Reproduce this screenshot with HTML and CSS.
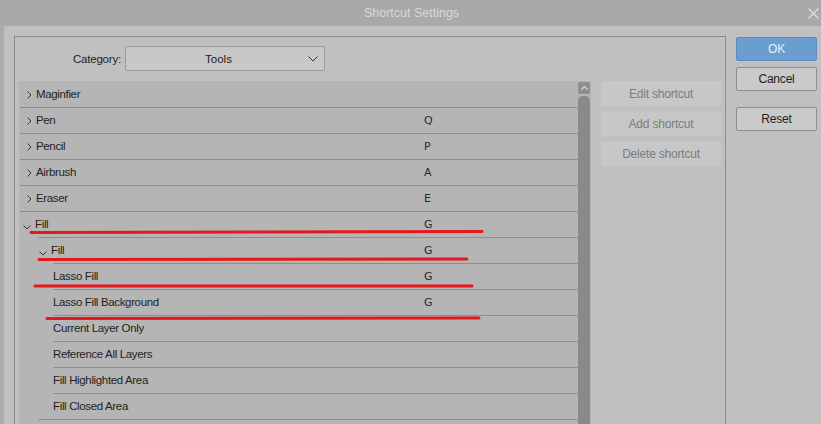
FILE: index.html
```html
<!DOCTYPE html>
<html lang="en">
<head>
  <meta charset="UTF-8" />
  <title>Shortcut Settings</title>
  <link rel="stylesheet" href="styles.css">
</head>
<body>
  <div class="titlebar">
    <span class="title">Shortcut Settings</span>
    <svg class="close" width="11" height="11" viewBox="0 0 11 11"><path d="M0.5 0.5L10.5 10.5M10.5 0.5L0.5 10.5" stroke="#e2e2e2" stroke-width="1.1"/></svg>
  </div>

  <div class="window">
    <div class="groupbox">
      <div class="category">
        <label>Category:</label>
        <div class="select">
          <span>Tools</span>
          <svg class="caret" width="10" height="6" viewBox="0 0 10 6"><path d="M0.5 0.5L5 5L9.5 0.5" fill="none" stroke="#333" stroke-width="1"/></svg>
        </div>
      </div>

      <div class="content">
        <div class="list">
          <div class="rows">
            <div class="row lvl0"><span class="arrow"><svg width="5" height="8" viewBox="0 0 5 8"><path d="M0.5 0.5L4 4L0.5 7.5" fill="none" stroke="#333" stroke-width="1"/></svg></span><span class="name">Maginfier</span><span class="key"></span></div>
            <div class="row lvl0"><span class="arrow"><svg width="5" height="8" viewBox="0 0 5 8"><path d="M0.5 0.5L4 4L0.5 7.5" fill="none" stroke="#333" stroke-width="1"/></svg></span><span class="name">Pen</span><span class="key">Q</span></div>
            <div class="row lvl0"><span class="arrow"><svg width="5" height="8" viewBox="0 0 5 8"><path d="M0.5 0.5L4 4L0.5 7.5" fill="none" stroke="#333" stroke-width="1"/></svg></span><span class="name">Pencil</span><span class="key">P</span></div>
            <div class="row lvl0"><span class="arrow"><svg width="5" height="8" viewBox="0 0 5 8"><path d="M0.5 0.5L4 4L0.5 7.5" fill="none" stroke="#333" stroke-width="1"/></svg></span><span class="name">Airbrush</span><span class="key">A</span></div>
            <div class="row lvl0"><span class="arrow"><svg width="5" height="8" viewBox="0 0 5 8"><path d="M0.5 0.5L4 4L0.5 7.5" fill="none" stroke="#333" stroke-width="1"/></svg></span><span class="name">Eraser</span><span class="key">E</span></div>
            <div class="row lvl0"><span class="arrow open"><svg width="8" height="5" viewBox="0 0 8 5"><path d="M0.5 0.5L4 4L7.5 0.5" fill="none" stroke="#333" stroke-width="1"/></svg></span><span class="name">Fill</span><span class="key">G</span></div>
            <div class="row lvl1"><span class="arrow open"><svg width="8" height="5" viewBox="0 0 8 5"><path d="M0.5 0.5L4 4L7.5 0.5" fill="none" stroke="#333" stroke-width="1"/></svg></span><span class="name">Fill</span><span class="key">G</span></div>
            <div class="row lvl2"><span class="name">Lasso Fill</span><span class="key">G</span></div>
            <div class="row lvl2"><span class="name">Lasso Fill Background</span><span class="key">G</span></div>
            <div class="row lvl2"><span class="name">Current Layer Only</span><span class="key"></span></div>
            <div class="row lvl2"><span class="name">Reference All Layers</span><span class="key"></span></div>
            <div class="row lvl2"><span class="name">Fill Highlighted Area</span><span class="key"></span></div>
            <div class="row lvl2"><span class="name">Fill Closed Area</span><span class="key"></span></div>
            <div class="row lvl1"><span class="name"></span><span class="key"></span></div>
          </div>
          <div class="scrollbar">
            <div class="scroll-up"><svg width="7" height="4" viewBox="0 0 7 4"><path d="M0.5 3.5L3.5 0.5L6.5 3.5" fill="none" stroke="#d8d8d8" stroke-width="1.2"/></svg></div>
            <div class="thumb"></div>
          </div>
        </div>

        <div class="actions">
          <button class="disabled">Edit shortcut</button>
          <button class="disabled">Add shortcut</button>
          <button class="disabled">Delete shortcut</button>
        </div>
      </div>
    </div>

    <div class="side">
      <button class="primary">OK</button>
      <button>Cancel</button>
      <button class="reset">Reset</button>
    </div>
  </div>

  <!-- hand drawn marks over the list -->
  <svg class="marks" width="821" height="424" viewBox="0 0 821 424">
    <g stroke="#e3191d" stroke-width="3" stroke-linecap="round" fill="none">
      <path d="M31 232.5L482 231.5"/>
      <path d="M39 259.5L467 259"/>
      <path d="M35 286L472 286"/>
      <path d="M47 318.5L479 318"/>
    </g>
  </svg>
</body>
</html>
```

FILE: styles.css
```css
* {
  box-sizing: border-box;
  margin: 0;
  padding: 0;
}

body {
  font-family: 'Liberation Sans', Arial, sans-serif;
  font-size: 11.5px;
  color: #1f1f1f;
  background: #c0c0c0;
  width: 821px;
  height: 424px;
  overflow: hidden;
  position: relative;
}

.titlebar {
  height: 26px;
  background: #a9a9a9;
  display: flex;
  align-items: center;
  justify-content: center;
  position: relative;
}

.title {
  color: #d8d8d8;
  font-size: 12.5px;
  margin-left: 2px;
}

.close {
  position: absolute;
  right: 2px;
  top: 8px;
}

.window {
  display: flex;
  border-left: 4px solid #ababab;
  padding: 10px 0 0 10px;
  height: 398px;
}

.groupbox {
  width: 712px;
  border: 1px solid #8c8c8c;
  border-bottom: none;
  padding: 9px 0 0 4px;
}

.category {
  display: flex;
  align-items: center;
  height: 25px;
}

.category label {
  width: 106px;
  text-align: right;
  padding-right: 4px;
  letter-spacing: -0.2px;
}

.select {
  width: 200px;
  height: 25px;
  background: #c8c8c8;
  border: 1px solid #9a9a9a;
  border-radius: 2px;
  display: flex;
  align-items: center;
  justify-content: center;
  position: relative;
  padding-right: 13px;
}

.caret {
  position: absolute;
  right: 6px;
  top: 9px;
}

.content {
  display: flex;
  gap: 10px;
  margin-top: 10px;
}

.list {
  width: 572px;
  height: 360px;
  background: #b5b5b5;
  display: flex;
}

.rows {
  width: 559px;
}

.row {
  display: flex;
  align-items: center;
  height: 26px;
  border-top: 1px solid #8e8e8e;
  letter-spacing: -0.35px;
}

.row:first-child {
  border-top-color: #b5b5b5;
}

.lvl0 {
  margin-left: 1px;
  padding-left: 7px;
}

.lvl1 {
  margin-left: 19px;
  padding-left: 1px;
}

.lvl2 {
  margin-left: 34px;
}

.arrow {
  width: 9px;
  height: 8px;
  display: flex;
}

.arrow.open {
  width: 12px;
  height: 5px;
  margin-top: 6px;
  margin-left: -4px;
}

.lvl1 .arrow.open {
  margin-left: 0;
  width: 12px;
}

.name {
  flex: 1;
  line-height: 25px;
}

.key {
  width: 154px;
  font-family: 'DejaVu Sans', sans-serif;
  font-size: 11px;
  letter-spacing: 0;
  color: #2a2a2a;
}

.scrollbar {
  width: 13px;
  padding: 1px 1px 0 0;
}

.scroll-up {
  height: 12px;
  background: #8e8e8e;
  border-radius: 2px;
  display: flex;
  align-items: center;
  justify-content: center;
}

.thumb {
  margin-top: 2px;
  height: 330px;
  background: #8a8a8a;
  border-radius: 5px 5px 0 0;
}

.actions {
  width: 120px;
  display: flex;
  flex-direction: column;
  gap: 5px;
}

button {
  font-family: 'Liberation Sans', Arial, sans-serif;
  font-size: 12px;
  letter-spacing: -0.2px;
  height: 24px;
  width: 81px;
  background: #cacaca;
  border: 1px solid #8e8e8e;
  border-radius: 2px;
  color: #222;
}

button.disabled {
  width: 120px;
  height: 25px;
  background: #c7c7c7;
  border: none;
  color: #7c7c7c;
}

.side {
  display: flex;
  flex-direction: column;
  gap: 6px;
  margin-left: 10px;
  padding-top: 1px;
}

button.primary {
  background: #6a9dd0;
  border-color: #5b8cbf;
  color: #e8f0f8;
}

button.reset {
  margin-top: 10px;
}

.marks {
  position: absolute;
  top: 0;
  left: 0;
  pointer-events: none;
}
```
